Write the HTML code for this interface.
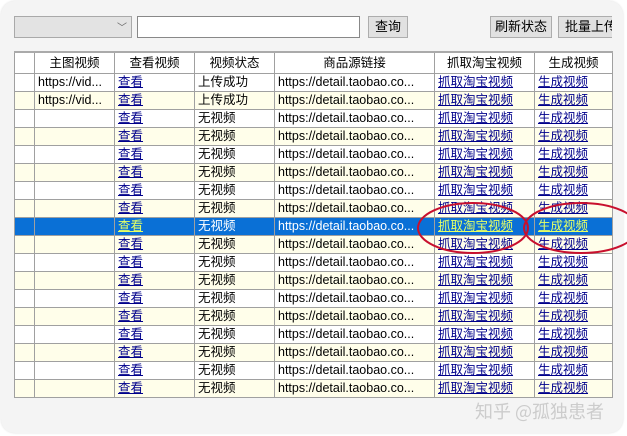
<!DOCTYPE html>
<html><head><meta charset="utf-8"><style>
*{margin:0;padding:0;box-sizing:border-box}
body{width:627px;height:436px;background:#fff;position:relative;overflow:hidden;font-family:"Liberation Sans","Noto Sans CJK SC",sans-serif;font-size:12px;color:#000}
.card{position:absolute;left:1px;top:1px;width:622px;height:432px;background:#f4f4f4;border-radius:14px;box-shadow:0 0 2px #ddd}
.el{position:absolute}
.sel{left:14px;top:16px;width:118px;height:22px;background:#e3e3e3;border:1px solid #a9a9a9}
.sel span{position:absolute;right:4px;top:2px;font-size:10px;color:#666}
.inp{left:137px;top:16px;width:223px;height:22px;background:#fff;border:1px solid #888}
.btn{top:16px;height:22px;background:#e1e1e1;border:1px solid #adadad;font-size:13px;text-align:center;line-height:20px}
table{position:absolute;left:14px;top:51px;border-collapse:collapse;table-layout:fixed;border-top:2px solid #aaa;width:598px}
td{border:1px solid #a0a0a0;height:18px;padding:0 3px;white-space:nowrap;overflow:hidden;font-size:12.5px;line-height:16px}
tr.h td{text-align:center;height:21px;background:#fff}
tr.w td{background:#fff}
tr.y td{background:#fffeea}
tr.b td{background:#0a70d6;color:#fff}
tr.b a{color:#e6ff66}
a{color:#00008b;text-decoration:underline}
.wm{left:475px;top:398px;color:#ccc;font-size:18px;font-family:"Noto Sans CJK SC",sans-serif}
</style></head><body>
<div class="card"></div>
<div class="el sel"><span>﹀</span></div>
<div class="el inp"></div>
<div class="el btn" style="left:368px;width:40px">查询</div>
<div class="el btn" style="left:490px;width:62px">刷新状态</div>
<div class="el btn" style="left:558px;width:54px;border-right:none;overflow:hidden;white-space:nowrap;text-align:left;padding-left:6px">批量上传</div>
<table>
<colgroup><col style="width:20px"><col style="width:80px"><col style="width:80px"><col style="width:80px"><col style="width:160px"><col style="width:100px"><col style="width:78px"></colgroup>
<tr class="h"><td></td><td>主图视频</td><td>查看视频</td><td>视频状态</td><td>商品源链接</td><td>抓取淘宝视频</td><td>生成视频</td></tr>
<tr class="w"><td></td><td>https://vid...</td><td><a>查看</a></td><td>上传成功</td><td>https://detail.taobao.co...</td><td><a>抓取淘宝视频</a></td><td><a>生成视频</a></td></tr>
<tr class="y"><td></td><td>https://vid...</td><td><a>查看</a></td><td>上传成功</td><td>https://detail.taobao.co...</td><td><a>抓取淘宝视频</a></td><td><a>生成视频</a></td></tr>
<tr class="w"><td></td><td></td><td><a>查看</a></td><td>无视频</td><td>https://detail.taobao.co...</td><td><a>抓取淘宝视频</a></td><td><a>生成视频</a></td></tr>
<tr class="y"><td></td><td></td><td><a>查看</a></td><td>无视频</td><td>https://detail.taobao.co...</td><td><a>抓取淘宝视频</a></td><td><a>生成视频</a></td></tr>
<tr class="w"><td></td><td></td><td><a>查看</a></td><td>无视频</td><td>https://detail.taobao.co...</td><td><a>抓取淘宝视频</a></td><td><a>生成视频</a></td></tr>
<tr class="y"><td></td><td></td><td><a>查看</a></td><td>无视频</td><td>https://detail.taobao.co...</td><td><a>抓取淘宝视频</a></td><td><a>生成视频</a></td></tr>
<tr class="w"><td></td><td></td><td><a>查看</a></td><td>无视频</td><td>https://detail.taobao.co...</td><td><a>抓取淘宝视频</a></td><td><a>生成视频</a></td></tr>
<tr class="y"><td></td><td></td><td><a>查看</a></td><td>无视频</td><td>https://detail.taobao.co...</td><td><a>抓取淘宝视频</a></td><td><a>生成视频</a></td></tr>
<tr class="b"><td></td><td></td><td><a>查看</a></td><td>无视频</td><td>https://detail.taobao.co...</td><td><a>抓取淘宝视频</a></td><td><a>生成视频</a></td></tr>
<tr class="y"><td></td><td></td><td><a>查看</a></td><td>无视频</td><td>https://detail.taobao.co...</td><td><a>抓取淘宝视频</a></td><td><a>生成视频</a></td></tr>
<tr class="w"><td></td><td></td><td><a>查看</a></td><td>无视频</td><td>https://detail.taobao.co...</td><td><a>抓取淘宝视频</a></td><td><a>生成视频</a></td></tr>
<tr class="y"><td></td><td></td><td><a>查看</a></td><td>无视频</td><td>https://detail.taobao.co...</td><td><a>抓取淘宝视频</a></td><td><a>生成视频</a></td></tr>
<tr class="w"><td></td><td></td><td><a>查看</a></td><td>无视频</td><td>https://detail.taobao.co...</td><td><a>抓取淘宝视频</a></td><td><a>生成视频</a></td></tr>
<tr class="y"><td></td><td></td><td><a>查看</a></td><td>无视频</td><td>https://detail.taobao.co...</td><td><a>抓取淘宝视频</a></td><td><a>生成视频</a></td></tr>
<tr class="w"><td></td><td></td><td><a>查看</a></td><td>无视频</td><td>https://detail.taobao.co...</td><td><a>抓取淘宝视频</a></td><td><a>生成视频</a></td></tr>
<tr class="y"><td></td><td></td><td><a>查看</a></td><td>无视频</td><td>https://detail.taobao.co...</td><td><a>抓取淘宝视频</a></td><td><a>生成视频</a></td></tr>
<tr class="w"><td></td><td></td><td><a>查看</a></td><td>无视频</td><td>https://detail.taobao.co...</td><td><a>抓取淘宝视频</a></td><td><a>生成视频</a></td></tr>
<tr class="y"><td></td><td></td><td><a>查看</a></td><td>无视频</td><td>https://detail.taobao.co...</td><td><a>抓取淘宝视频</a></td><td><a>生成视频</a></td></tr>
</table>
<svg class="el" style="left:0;top:0" width="627" height="436"><g fill="none" stroke="#c8102e" stroke-width="2"><ellipse cx="473" cy="228" rx="55" ry="25"/><ellipse cx="581" cy="228" rx="57" ry="25"/></g></svg>
<div class="el wm">知乎 @孤独患者</div>
</body></html>
